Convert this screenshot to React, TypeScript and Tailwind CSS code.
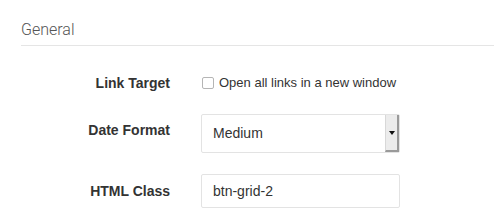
import React from "react";

export default function App() {
  return (
    <div className="w-[494px] h-[223px] bg-white overflow-hidden" style={{ fontFamily: '"Liberation Sans", Arial, sans-serif' }}>
      <div className="pl-[21px] pt-[20px]">
        <div
          className="border-b border-[#e5e5e5] pb-[5px] text-[16px] leading-[20px] font-light text-[#555]"
          style={{ fontFamily: 'Roboto, "Liberation Sans", sans-serif' }}
        >
          General
        </div>
        <div className="flex items-center mt-[28px] h-[18px]">
          <div className="w-[149px] text-right text-[14px] font-bold text-[#333]">Link Target</div>
          <label className="ml-[32px] flex items-center text-[13px] text-[#333]">
            <span className="w-[12px] h-[12px] border border-[#b5b5b5] rounded-[2px] bg-white mr-[5px]" />
            Open all links in a new window
          </label>
        </div>
        <div className="flex items-start mt-[22px]">
          <div className="w-[149px] text-right text-[14px] font-bold text-[#333] pt-[6px]">Date Format</div>
          <div className="ml-[31px] w-[199px] h-[39px] border border-[#e3e3e3] rounded-[2px] flex items-stretch">
            <div className="flex-1 flex items-center pl-[11px] text-[14px] text-[#333]">Medium</div>
            <div className="w-[14px] bg-[#ececec] border-l border-[#d8d8d8] border-r-[2px] border-b-[2px] border-r-[#9a9a9a] border-b-[#9a9a9a] flex items-center justify-center">
              <svg width="6" height="4" viewBox="0 0 6 4"><path d="M0 0H6L3 4Z" fill="#111" /></svg>
            </div>
          </div>
        </div>
        <div className="flex items-center mt-[21px]">
          <div className="w-[149px] text-right text-[14px] font-bold text-[#333]">HTML Class</div>
          <div className="ml-[31px] w-[199px] h-[34px] border border-[#e3e3e3] rounded-[2px] flex items-center pl-[11px] text-[14px] text-[#333]">
            btn-grid-2
          </div>
        </div>
      </div>
    </div>
  );
}
